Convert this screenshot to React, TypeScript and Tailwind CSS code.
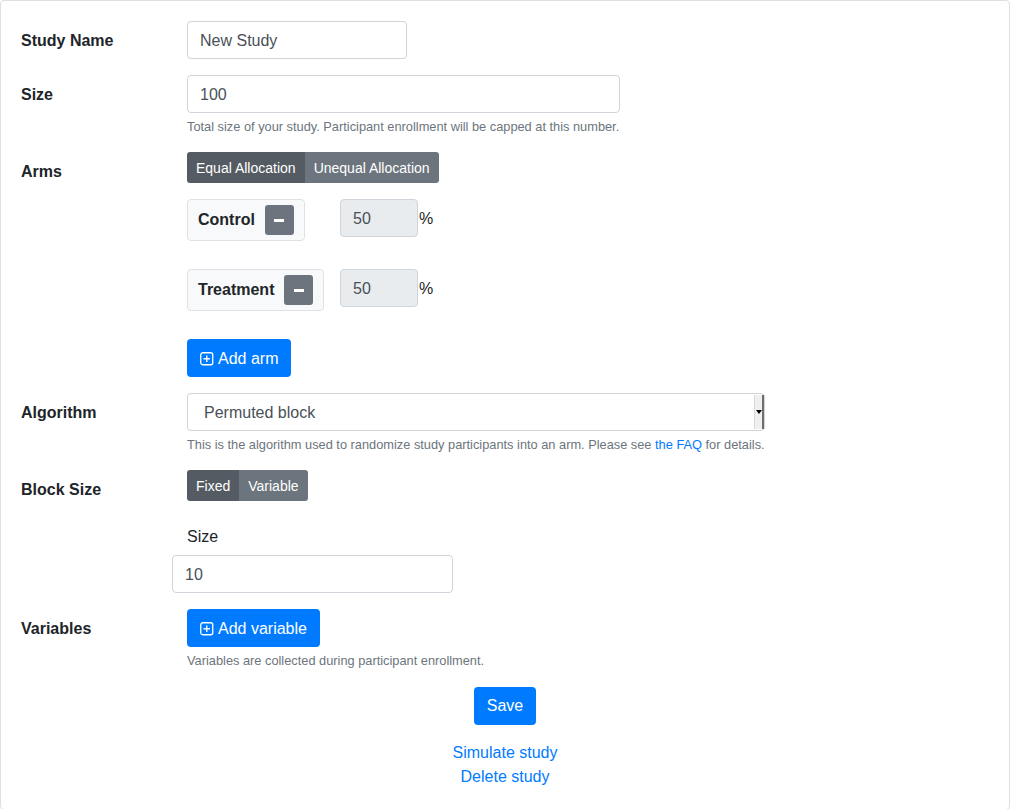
import React from "react";

function PlusSquare() {
  return (
    <svg width="14" height="14" viewBox="0 0 14 14" fill="none" stroke="currentColor" className="mr-[4px] shrink-0">
      <rect x="0.75" y="0.75" width="12" height="12" rx="2" strokeWidth="1.3" />
      <path d="M6.75 3.5v6.5M3.5 6.75h6.5" strokeWidth="1.4" />
    </svg>
  );
}

function Label({ children }: { children: React.ReactNode }) {
  return <div className="font-bold pt-[8px] pb-[6px] leading-6">{children}</div>;
}

function Help({ children }: { children: React.ReactNode }) {
  return <div className="mt-1 text-[12.8px] leading-[19.2px] text-[#6c757d]">{children}</div>;
}

function TextInput({ value, className }: { value: string; className: string }) {
  return (
    <div className={`h-[38px] border border-[#ced4da] rounded-[4px] bg-white px-3 pt-[7px] leading-6 text-[#495057] ${className}`}>
      {value}
    </div>
  );
}

function Toggle({ items }: { items: string[] }) {
  return (
    <div className="flex w-fit rounded-[3px] overflow-hidden text-[14px] leading-[21px] text-white">
      {items.map((t, i) => (
        <div
          key={t}
          className={`px-[9px] pt-[6px] pb-[4px] ${i === 0 ? "bg-[#545b62]" : "bg-[#6c757d]"}`}
        >
          {t}
        </div>
      ))}
    </div>
  );
}

function ArmRow({ name }: { name: string }) {
  return (
    <div className="flex items-start mb-[28px]">
      <div className="w-[153px] shrink-0">
        <div className="w-fit h-[42px] flex items-center gap-[10px] border border-[#dee2e6] bg-[#f8f9fa] rounded-[4px] pl-[10px] pr-[10px]">
          <span className="font-bold">{name}</span>
          <div className="w-[29px] h-[30px] bg-[#6c757d] rounded-[3px] flex items-center justify-center">
            <div className="w-[10px] h-[3px] bg-white" />
          </div>
        </div>
      </div>
      <div className="w-[78px] h-[38px] border border-[#ced4da] rounded-[4px] bg-[#e9ecef] px-3 pt-[7px] leading-6 text-[#495057]">
        50
      </div>
      <span className="ml-px mt-[8px]">%</span>
    </div>
  );
}

function BlueButton({ children, icon }: { children: React.ReactNode; icon?: boolean }) {
  return (
    <div className="w-fit h-[38px] px-[13px] pt-px flex items-center bg-[#007bff] text-white rounded-[4px]">
      {icon && <PlusSquare />}
      {children}
    </div>
  );
}

export default function App() {
  return (
    <div className="w-[1010px] h-[809px] font-['Liberation_Sans',Arial,sans-serif] text-base leading-6 text-[#212529] bg-white">
      <div className="border border-[#dfdfdf] rounded-[4px] p-5">
        <div className="grid grid-cols-[166px_1fr] mb-4">
          <Label>Study Name</Label>
          <TextInput value="New Study" className="w-[220px]" />
        </div>

        <div className="grid grid-cols-[166px_1fr] mb-4">
          <Label>Size</Label>
          <div>
            <TextInput value="100" className="w-[433px]" />
            <Help>Total size of your study. Participant enrollment will be capped at this number.</Help>
          </div>
        </div>

        <div className="grid grid-cols-[166px_1fr] mb-4">
          <Label>Arms</Label>
          <div>
            <Toggle items={["Equal Allocation", "Unequal Allocation"]} />
            <div className="mt-4">
              <ArmRow name="Control" />
              <ArmRow name="Treatment" />
            </div>
            <BlueButton icon>Add arm</BlueButton>
          </div>
        </div>

        <div className="grid grid-cols-[166px_1fr] mb-4">
          <Label>Algorithm</Label>
          <div>
            <div className="relative w-[578px] h-[38px] border border-[#ced4da] rounded-[4px] bg-white pl-4 pt-[7px] leading-6 text-[#495057]">
              Permuted block
              <div className="absolute right-0 top-px bottom-px w-[10px] bg-[#efefef] border-l border-[#d8d8d8] border-r-2 border-r-[#6f6f6f] flex items-center justify-center">
                <div className="w-0 h-0 border-l-[3px] border-r-[3px] border-t-[4px] border-l-transparent border-r-transparent border-t-black" />
              </div>
            </div>
            <Help>
              This is the algorithm used to randomize study participants into an arm. Please see{" "}
              <span className="text-[#007bff]">the FAQ</span> for details.
            </Help>
          </div>
        </div>

        <div className="grid grid-cols-[166px_1fr] mb-4">
          <Label>Block Size</Label>
          <div>
            <Toggle items={["Fixed", "Variable"]} />
            <div className="mt-[24px] mb-[6px]">Size</div>
            <TextInput value="10" className="w-[281px] -ml-[15px]" />
          </div>
        </div>

        <div className="grid grid-cols-[166px_1fr] mb-4">
          <Label>Variables</Label>
          <div>
            <BlueButton icon>Add variable</BlueButton>
            <Help>Variables are collected during participant enrollment.</Help>
          </div>
        </div>

        <div className="flex flex-col items-center">
          <BlueButton>Save</BlueButton>
          <div className="mt-4 text-[#007bff]">Simulate study</div>
          <div className="text-[#007bff]">Delete study</div>
        </div>
      </div>
    </div>
  );
}
